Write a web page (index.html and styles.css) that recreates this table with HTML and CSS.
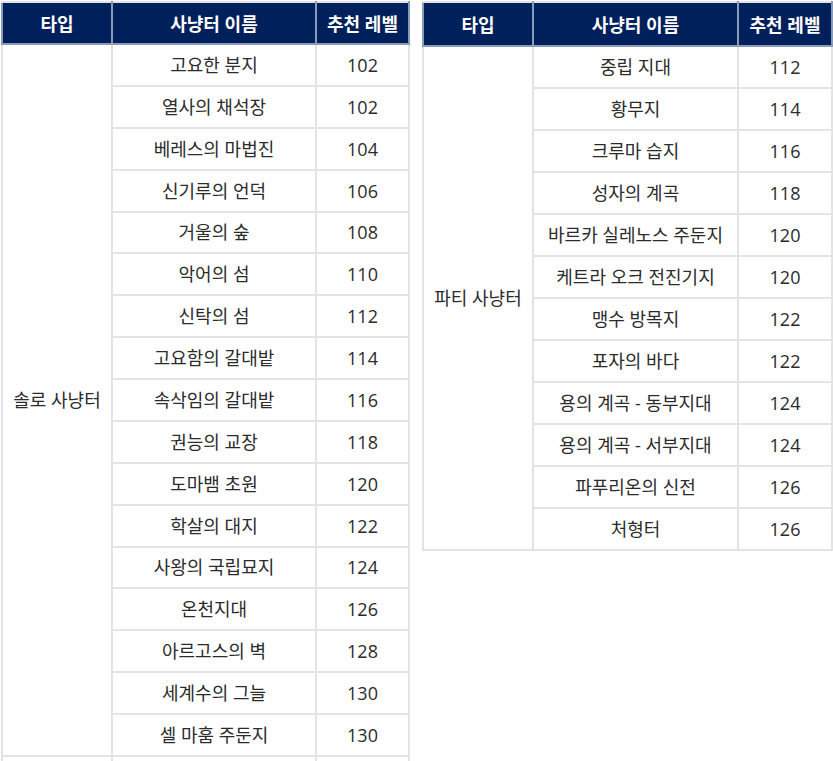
FILE: index.html
```html
<!DOCTYPE html>
<html lang="ko">
<head>
<meta charset="utf-8">
<link rel="stylesheet" href="styles.css">
</head>
<body>
<div class="wrap">
  <table class="grid grid-left">
    <colgroup><col class="c-type"><col class="c-name"><col class="c-lv"></colgroup>
    <thead>
      <tr><th>타입</th><th>사냥터 이름</th><th>추천 레벨</th></tr>
    </thead>
    <tbody>
      <tr><td rowspan="17">솔로 사냥터</td><td>고요한 분지</td><td>102</td></tr>
      <tr><td>열사의 채석장</td><td>102</td></tr>
      <tr><td>베레스의 마법진</td><td>104</td></tr>
      <tr><td>신기루의 언덕</td><td>106</td></tr>
      <tr><td>거울의 숲</td><td>108</td></tr>
      <tr><td>악어의 섬</td><td>110</td></tr>
      <tr><td>신탁의 섬</td><td>112</td></tr>
      <tr><td>고요함의 갈대밭</td><td>114</td></tr>
      <tr><td>속삭임의 갈대밭</td><td>116</td></tr>
      <tr><td>권능의 교장</td><td>118</td></tr>
      <tr><td>도마뱀 초원</td><td>120</td></tr>
      <tr><td>학살의 대지</td><td>122</td></tr>
      <tr><td>사왕의 국립묘지</td><td>124</td></tr>
      <tr><td>온천지대</td><td>126</td></tr>
      <tr><td>아르고스의 벽</td><td>128</td></tr>
      <tr><td>세계수의 그늘</td><td>130</td></tr>
      <tr><td>셀 마훔 주둔지</td><td>130</td></tr>
      <tr><td>&nbsp;</td><td>&nbsp;</td><td>&nbsp;</td></tr>
    </tbody>
  </table>
  <table class="grid grid-right">
    <colgroup><col class="c-type"><col class="c-name"><col class="c-lv"></colgroup>
    <thead>
      <tr><th>타입</th><th>사냥터 이름</th><th>추천 레벨</th></tr>
    </thead>
    <tbody>
      <tr><td rowspan="12">파티 사냥터</td><td>중립 지대</td><td>112</td></tr>
      <tr><td>황무지</td><td>114</td></tr>
      <tr><td>크루마 습지</td><td>116</td></tr>
      <tr><td>성자의 계곡</td><td>118</td></tr>
      <tr><td>바르카 실레노스 주둔지</td><td>120</td></tr>
      <tr><td>케트라 오크 전진기지</td><td>120</td></tr>
      <tr><td>맹수 방목지</td><td>122</td></tr>
      <tr><td>포자의 바다</td><td>122</td></tr>
      <tr><td>용의 계곡 - 동부지대</td><td>124</td></tr>
      <tr><td>용의 계곡 - 서부지대</td><td>124</td></tr>
      <tr><td>파푸리온의 신전</td><td>126</td></tr>
      <tr><td>처형터</td><td>126</td></tr>
    </tbody>
  </table>
</div>
</body>
</html>
```

FILE: styles.css
```css
html, body {
  margin: 0;
  padding: 0;
  background: #ffffff;
}

body {
  font-family: "Open Sans", "Noto Sans CJK KR", sans-serif;
  font-size: 18px;
  color: #2b2b2b;
}

.wrap {
  display: flex;
  align-items: flex-start;
  gap: 12px;
  padding: 1px 0 0 1px;
}

.grid {
  border-collapse: collapse;
  table-layout: fixed;
}

.grid-left {
  width: 407px;
}

.grid-right {
  width: 409px;
}

.c-type { width: 110px; }
.c-name { width: 204px; }
.c-lv { width: 93px; }

.grid-right .c-name { width: 205px; }
.grid-right .c-lv { width: 94px; }

.grid th,
.grid td {
  border: 2px solid #e3e3e3;
  text-align: center;
  vertical-align: middle;
  padding: 0 4px;
  white-space: nowrap;
}

.grid th {
  background: #00205b;
  color: #ffffff;
  font-weight: 700;
  height: 40px;
  border-color: #8a9bb8;
  border-top-color: #e3e3e3;
}

.grid-right th {
  height: 42px;
}

.grid td {
  height: 39.88px;
  line-height: 24px;
}

.grid-right td {
  height: 40px;
}
```
